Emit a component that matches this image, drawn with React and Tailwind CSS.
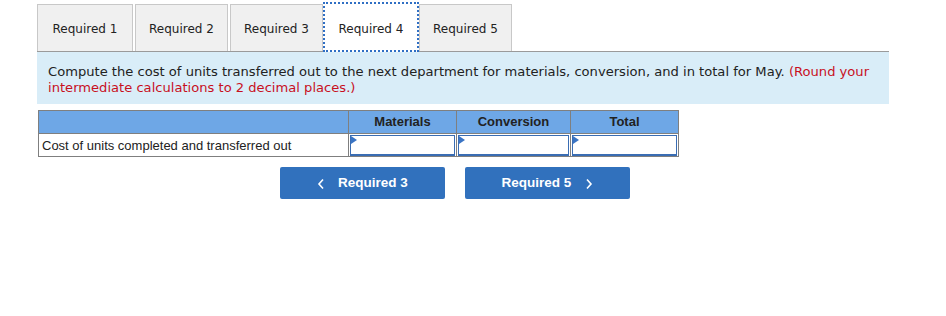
import React from "react";

const tabs = ["Required 1", "Required 2", "Required 3", "Required 4", "Required 5"];

function InputCell() {
  return (
    <td className="border border-[#7f7f7f] p-0 h-[23px] bg-white">
      <div className="relative h-[21px] mx-px border border-[#3a6db3] border-b-2 bg-white">
        <span className="absolute left-0 top-0 w-0 h-0 border-t-[4px] border-b-[4px] border-l-[6px] border-t-transparent border-b-transparent border-l-[#3a74c4]" />
      </div>
    </td>
  );
}

export default function App() {
  return (
    <div className="w-[946px] h-[316px] bg-white pl-[37px] pt-[3px] font-['DejaVu_Sans',sans-serif]">
      <div className="flex items-end w-[852px] h-[49px] border-b border-[#9a9a9a]">
        {tabs.map((t, i) => {
          const active = i === 3;
          return active ? (
            <div
              key={t}
              className="w-[96px] h-[50px] -mb-px pt-[4px] flex items-center justify-center bg-white border-2 border-dotted border-[#2f6fc4] text-[12px] text-[#222]"
            >
              {t}
            </div>
          ) : (
            <div
              key={t}
              className={`${i === 0 ? "w-[96px]" : "w-[93px]"} ${i < 2 ? "mr-[2px]" : ""} h-[47px] pt-[2px] flex items-center justify-center bg-[#f0f0f0] border border-b-0 border-[#c8c8c8] text-[12px] text-[#222]`}
            >
              {t}
            </div>
          );
        })}
      </div>

      <div className="w-[852px] bg-[#d9edf8] pl-[11px] pr-2 pt-[12px] pb-[8px] text-[13.1px] leading-[16px] text-[#222]">
        Compute the cost of units transferred out to the next department for materials, conversion, and in total for May.{" "}
        <span className="text-[#c8101e]">(Round your intermediate calculations to 2 decimal places.)</span>
      </div>

      <table className="ml-px mt-[6px] border-collapse font-['Liberation_Sans',Arial,sans-serif] text-[13px] text-[#222]">
        <thead>
          <tr className="bg-[#6ea7e6] h-[23px]">
            <th className="w-[310px] border border-[#7f7f7f]"></th>
            <th className="w-[108px] border border-[#7f7f7f] font-bold">Materials</th>
            <th className="w-[114px] border border-[#7f7f7f] font-bold">Conversion</th>
            <th className="w-[108px] border border-[#7f7f7f] font-bold">Total</th>
          </tr>
        </thead>
        <tbody>
          <tr>
            <td className="border border-[#7f7f7f] pl-[3px] pt-[2px] text-left">Cost of units completed and transferred out</td>
            <InputCell />
            <InputCell />
            <InputCell />
          </tr>
        </tbody>
      </table>

      <div className="flex gap-5 ml-[243px] mt-[10px] font-['Liberation_Sans',Arial,sans-serif]">
        <button className="w-[165px] h-[32px] pt-px rounded-[2px] bg-[#3171bd] text-white text-[13.5px] font-bold flex items-center justify-center gap-[13px]">
          <svg width="8" height="12" viewBox="0 0 8 12" fill="none" stroke="white" strokeWidth="1.6">
            <path d="M6 1.5 L2 6 L6 10.5" />
          </svg>
          Required 3
        </button>
        <button className="w-[165px] h-[32px] pt-px rounded-[2px] bg-[#3171bd] text-white text-[13.5px] font-bold flex items-center justify-center gap-[14px]">
          Required 5
          <svg width="8" height="12" viewBox="0 0 8 12" fill="none" stroke="white" strokeWidth="1.6">
            <path d="M2 1.5 L6 6 L2 10.5" />
          </svg>
        </button>
      </div>
    </div>
  );
}
